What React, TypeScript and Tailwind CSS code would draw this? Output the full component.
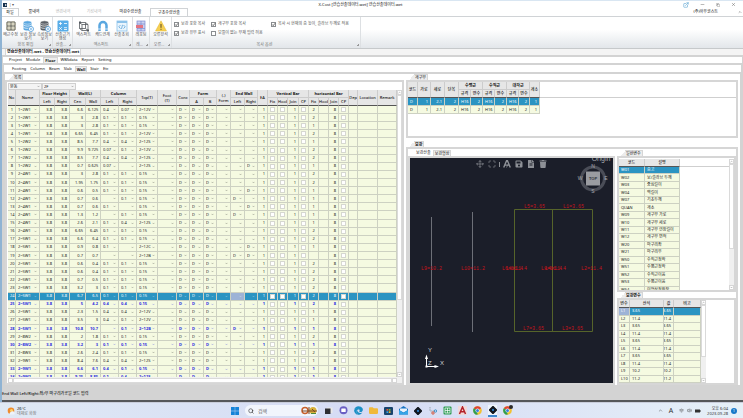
import { useState } from "react";
import type { ReactNode } from "react";
import { ChevronDown, ChevronUp, Move, Maximize, Search, Wifi, Volume2, Minus, Copy, X, ExternalLink } from "lucide-react";
import { FaSave, FaTrash, FaFileAlt, FaEdge, FaFolder } from "react-icons/fa";

type Row = {
  name: string;
  cen: string;
  wall: string;
  cl: string;
  cr: string;
  top: string;
  el: string;
  er: string;
  fix: string;
  edited: boolean;
};

const row = (name: string, cen: string, wall: string, cl: string, cr: string, top: string, fix: string, el = "", er = "", edited = false): Row => ({
  name, cen, wall, cl, cr, top, fix, el, er, edited,
});

const rows: Row[] = [
  row("1~2W1", "6.6", "6.125", "0.4", "0.07", "2~12V", "2"),
  row("1~2W1", "3", "2.8", "0.1", "0.1", "0.15", "2"),
  row("1~2W1", "3", "2.8", "0.1", "0.1", "0.15", "1"),
  row("1~2W1", "6.65", "6.45", "0.1", "0.1", "2~12V", "2"),
  row("1~2W2", "8.5", "7.7", "0.4", "0.4", "2~12S", "1"),
  row("1~2W2", "9.9", "9.725", "0.07", "0.1", "2~12V", "2"),
  row("1~2W2", "8.5", "7.7", "0.4", "0.4", "2~12S", "2"),
  row("1~2W2", "0.7", "0.625", "0.07", "", "2~12S", "1", "", "D"),
  row("2~4W1", "3", "2.8", "0.1", "0.1", "0.15", "2"),
  row("2~4W1", "1.95", "1.75", "0.1", "0.1", "0.15", "2"),
  row("2~4W1", "0.6", "0.5", "0.1", "0.1", "0.15", "1", "", "D"),
  row("2~4W1", "0.7", "0.6", "", "0.1", "0.15", "1", "D"),
  row("2~4W1", "0.7", "0.6", "0.1", "", "0.15", "1", "", "D"),
  row("2~4W1", "1.3", "1.2", "", "0.1", "0.15", "1", "D"),
  row("2~4W1", "2.6", "2.1", "0.1", "0.4", "2~12S", "1"),
  row("2~4W1", "6.65", "6.45", "0.1", "0.1", "0.15", "2"),
  row("2~5W1", "6.6", "6.4", "0.1", "0.1", "0.15", "2"),
  row("2~5W1", "0.9", "0.8", "0.1", "", "2~12C", "1", "", "D"),
  row("2~5W1", "0.7", "0.7", "", "", "2~12B", "", "D", "D"),
  row("2~5W1", "0.6", "0.4", "0.1", "0.1", "0.15", "2"),
  row("2~5W1", "0.6", "0.4", "0.1", "0.1", "0.15", "2"),
  row("2~5W1", "0.7", "0.5", "0.1", "0.1", "0.15", "2"),
  row("2~5W1", "3.2", "3", "0.1", "0.1", "0.15", "2"),
  row("2~5W1", "6.7", "6.5", "0.1", "0.1", "0.15", "2"),
  row("2~5W1", "5", "4.2", "0.4", "0.4", "0.15", "2", "", "", true),
  row("2~5W1", "2.3", "1.5", "0.4", "0.4", "2~12V", "1"),
  row("2~5W1", "3.5", "3", "0.4", "0.1", "2~12V", "1"),
  row("2~5W1", "10.8", "10.7", "", "0.1", "2~12B", "1", "D", "", true),
  row("2~8W2", "2", "1.8", "0.1", "0.1", "0.15", "2"),
  row("2~8W2", "3.2", "3", "0.1", "0.1", "0.15", "1", "", "", true),
  row("2~8W3", "2.6", "2.4", "0.1", "0.1", "0.15", "2"),
  row("2~9W1", "8.4", "7.6", "0.4", "0.4", "2~12S", "1"),
  row("2~9W1", "6.6", "6.1", "0.4", "0.1", "0.15", "1", "", "", true),
  row("2~9W1", "9.25", "8.85", "0.1", "0.4", "2~12S", "1", "", "", true),
];

const wallCols = [8, 24, 15, 15, 16, 15, 18, 18, 21, 19, 13, 14, 13, 14, 14, 13, 10, 10, 10, 11, 10, 10, 10, 10, 10, 9, 20, 19];

const generalVars = [
  ["W01", "층고"],
  ["W02", "보/슬라브 두께"],
  ["W03", "중심길이"],
  ["W04", "벽길이"],
  ["W07", "기초두께"],
  ["QUAN", "개소"],
  ["W09", "개구부 가로"],
  ["W10", "개구부 세로"],
  ["W11", "개구부 연장길이"],
  ["W12", "개구부 면적"],
  ["W20", "마구리좌"],
  ["W21", "마구리우"],
  ["W50", "수직근정착"],
  ["W51", "수평근정착"],
  ["W52", "수직근이음"],
  ["W53", "수평근이음"],
  ["W54", "이형상정착장"],
];

const barVars = [
  ["L1", "3.65", "3.65"],
  ["L2", "11.4", "11.4"],
  ["L3", "3.65", "3.65"],
  ["L4", "11.4", "11.4"],
  ["L5", "3.65", "3.65"],
  ["L6", "11.4", "11.4"],
  ["L7", "3.65", "3.65"],
  ["L8", "11.4", "11.4"],
  ["L9", "10.2", "10.2"],
  ["L10", "11.2", "11.2"],
];

function Cols({ widths }: { widths: number[] }) {
  return (
    <colgroup>
      {widths.map((w, i) => (
        <col key={i} style={{ width: w }} />
      ))}
    </colgroup>
  );
}

function Th({ children, rowSpan, colSpan, last }: { children?: ReactNode; rowSpan?: number; colSpan?: number; last?: boolean }) {
  return (
    <th
      rowSpan={rowSpan}
      colSpan={colSpan}
      className={`overflow-hidden whitespace-nowrap border-r border-[#cccccc] bg-[#e6e6e6] p-0 leading-[5px] ${
        colSpan ? "font-bold" : "font-medium"
      } ${last || rowSpan ? "border-b border-b-[#555555]" : "border-b"}`}
    >
      {children}
    </th>
  );
}

function Td({ children, className = "" }: { children?: ReactNode; className?: string }) {
  return <td className={`overflow-hidden whitespace-nowrap border-b border-r border-[#cdd1c2] p-0 px-[2px] leading-[6px] ${className}`}>{children}</td>;
}

// value + arrow, used in the grid cells
function Drop({ value, label }: { value: string; label: string }) {
  return (
    <span className="flex h-[6px] items-center">
      <select aria-label={label} defaultValue={value} className="h-[6px] min-w-0 flex-1 appearance-none bg-transparent p-0 leading-[6px] outline-none">
        <option>{value}</option>
      </select>
      <ChevronDown className="size-[3px] shrink-0 opacity-70" strokeWidth={3} />
    </span>
  );
}

function Check({ label }: { label: string }) {
  return <input type="checkbox" aria-label={label} className="mx-auto block size-[5px] appearance-none border border-[#d6d8d0] bg-white" />;
}

function VScroll({ thumb }: { thumb: string }) {
  return (
    <div className="flex w-[5px] shrink-0 flex-col bg-[#f0f0f0]">
      <button aria-label="위로" className="flex h-[5px] items-center justify-center border border-[#d6d6d6] bg-white">
        <ChevronUp className="size-[3px]" />
      </button>
      <div className={`border border-[#dadada] bg-white ${thumb}`} />
      <div className="flex-1" />
      <button aria-label="아래로" className="flex h-[5px] items-center justify-center border border-[#d6d6d6] bg-white">
        <ChevronDown className="size-[3px]" />
      </button>
    </div>
  );
}

function Tab({ children }: { children: ReactNode }) {
  return (
    <div className="flex h-[6px] shrink-0 items-end pl-1">
      <div className="h-[6px] w-1 bg-[linear-gradient(135deg,transparent_50%,#ececec_50%)]" />
      <div className="border-r border-t border-[#d6d6d6] bg-[#ececec] px-px text-[4px] leading-[5px]">{children}</div>
    </div>
  );
}

function WallTable() {
  const [selected, setSelected] = useState(23);

  return (
    <table className="h-[292px] w-full table-fixed border-separate border-spacing-0 text-[4px]">
      <Cols widths={wallCols} />
      <thead>
        <tr className="h-2">
          <Th rowSpan={2}>No</Th>
          <Th rowSpan={2}>Name</Th>
          <Th colSpan={2}>Floor Height</Th>
          <Th colSpan={2}>Wall(L)</Th>
          <Th colSpan={2}>Column</Th>
          <Th rowSpan={2}>Top(T)</Th>
          <Th rowSpan={2}>Foot<br />(T)</Th>
          <Th rowSpan={2}>Conc</Th>
          <Th colSpan={2}>Form</Th>
          <Th rowSpan={2}>(-)<br />Form</Th>
          <Th colSpan={2}>End Wall</Th>
          <Th rowSpan={2}>EA</Th>
          <Th colSpan={4}>Vertical Bar</Th>
          <Th colSpan={4}>horizontal Bar</Th>
          <Th rowSpan={2}>Dep</Th>
          <Th rowSpan={2}>Location</Th>
          <Th rowSpan={2}>Remark</Th>
        </tr>
        <tr className="h-2">
          {["Left", "Right", "Cen", "Wall", "Left", "Right", "A", "B", "Left", "Right", "Fix", "Hook", "Join", "CP", "Fix", "Hook", "Join", "CP"].map((h, i) => (
            <Th key={i} last>{h}</Th>
          ))}
        </tr>
      </thead>
      <tbody>
        {rows.map((r, i) => {
          const on = i === selected;
          return (
            <tr
              key={i}
              onClick={() => setSelected(i)}
              className={on ? "bg-[#2b94c2] text-white" : r.edited ? "bg-[#f5fae1] font-bold text-[#2a2ae0]" : "bg-[#f5fae1] text-[#222222]"}
            >
              <Td className="text-right">{i + 1}</Td>
              <Td><Drop value={r.name} label="Name" /></Td>
              <Td className="text-right">3.8</Td>
              <Td className="text-right">3.8</Td>
              <Td className="text-right">{r.cen}</Td>
              <Td className="text-right">{r.wall}</Td>
              <Td><Drop value={r.cl} label="Column Left" /></Td>
              <Td><Drop value={r.cr} label="Column Right" /></Td>
              <Td><Drop value={r.top} label="Top(T)" /></Td>
              <Td><Drop value="" label="Foot(T)" /></Td>
              <Td><Drop value="D" label="Conc" /></Td>
              <Td><Drop value="D" label="Form A" /></Td>
              <Td><Drop value="D" label="Form B" /></Td>
              <Td><Drop value="" label="(-)Form" /></Td>
              <Td className={on ? "bg-[#9db3d6]" : ""}><Drop value={r.el} label="End Wall Left" /></Td>
              <Td><Drop value={r.er} label="End Wall Right" /></Td>
              <Td className="text-right">1</Td>
              <Td><Check label="Vertical Fix" /></Td>
              <Td><Check label="Vertical Hook" /></Td>
              <Td className="text-right">1</Td>
              <Td><Check label="Vertical CP" /></Td>
              <Td className="text-center">{r.fix}</Td>
              <Td />
              <Td className="text-right">8</Td>
              <Td><Check label="Horizontal CP" /></Td>
              <Td />
              <Td />
              <Td />
            </tr>
          );
        })}
      </tbody>
    </table>
  );
}

function OpeningTable() {
  return (
    <table className="w-[132px] shrink-0 table-fixed border-separate border-spacing-0 text-[4px]">
      <Cols widths={[10, 13, 14, 14, 12, 12, 12, 12, 12, 11, 10]} />
      <thead>
        <tr className="h-2">
          <Th rowSpan={2}>코드</Th>
          <Th rowSpan={2}>가로</Th>
          <Th rowSpan={2}>세로</Th>
          <Th rowSpan={2}>단복</Th>
          <Th colSpan={2}>수평근</Th>
          <Th colSpan={2}>수직근</Th>
          <Th colSpan={2}>대각근</Th>
          <Th rowSpan={2}>개소</Th>
        </tr>
        <tr className="h-2">
          {["규격", "면수", "규격", "면수", "규격", "면수"].map((h, i) => (
            <Th key={i} last>{h}</Th>
          ))}
        </tr>
      </thead>
      <tbody>
        {[0, 1].map((n) => (
          <tr key={n} className={n === 0 ? "h-2 bg-[#2b94c2] text-white" : "h-2 bg-[#f5fae1] text-[#222222]"}>
            <Td>D</Td>
            <Td className="text-right">1</Td>
            <Td className="text-right">2.1</Td>
            <Td className="text-right">2</Td>
            <Td>H16</Td>
            <Td className="text-right">2</Td>
            <Td>H16</Td>
            <Td className="text-right">2</Td>
            <Td>H16</Td>
            <Td className="text-right">2</Td>
            <Td className="text-right">1</Td>
          </tr>
        ))}
      </tbody>
    </table>
  );
}

const cadTexts: [number, number, string][] = [
  [524, 207, "L5=3.65"],
  [563, 207, "L1=3.65"],
  [421, 269, "L9=10.2"],
  [461, 269, "L10=11.2"],
  [502, 269, "L6=11.4"],
  [506, 269, "L8=11.4"],
  [541, 269, "L8=11.4"],
  [545, 269, "L4=11.4"],
  [581, 269, "L2=11.4"],
  [523, 329, "L7=3.65"],
  [562, 329, "L3=3.65"],
];

function CadView() {
  return (
    <div className="relative min-h-0 min-w-0 flex-1 overflow-hidden bg-[#1b1e29]">
      <svg viewBox="410 157 203 225" className="h-full w-full" fontFamily="'Liberation Mono', monospace">
        <path d="M431.500 216V325M472.500 211V331" stroke="#6d7078" strokeWidth="1" />
        <path d="M514.500 208.500H592.500V330.500H514.500ZM552.500 208.500V330.500" fill="none" stroke="#56642a" strokeWidth="1" />
        <g fill="#c4141c" fontSize="5">
          {cadTexts.map(([x, y, t]) => (
            <text key={`${x}-${y}`} x={x} y={y}>{t}</text>
          ))}
        </g>
        <circle cx="593" cy="177.5" r="11.5" fill="none" stroke="#4a4d57" strokeWidth="3" />
        <rect x="586" y="170.500" width="14" height="14" fill="#9a9ca1" />
        <g fill="#a8abb0" fontSize="5" textAnchor="middle" fontFamily="'Liberation Sans', sans-serif">
          <text x="593" y="167">N</text>
          <text x="580" y="179">W</text>
          <text x="606" y="179">E</text>
          <text x="593" y="192">S</text>
          <text x="593" y="179" fontSize="4" fontWeight="bold" fill="#30333c">TOP</text>
          <text x="601" y="160" fontSize="7">Origin</text>
        </g>
        <path d="M426.500 357V365.500H435" fill="none" stroke="#ffffff" strokeWidth="1" />
        <path d="M426.500 353.500L428 358H425ZM439 365.500L434.500 367V364ZM425.500 364.500H427.500V366.500H425.500Z" fill="#ffffff" />
        <g fill="#d0d2d6" fontSize="6" fontFamily="'Liberation Sans', sans-serif">
          <text x="428" y="351">Y</text>
          <text x="428" y="364">Z</text>
          <text x="440" y="364">X</text>
        </g>
      </svg>
      <div className="absolute left-0 right-0 top-[2px] flex items-center justify-center gap-1 text-[#8d9096]">
        <button aria-label="이동"><Move className="size-2" /></button>
        <button aria-label="전체보기"><Maximize className="size-2" /></button>
        <span className="-mx-px h-[5px] w-px bg-[#8d9096]" />
        <button aria-label="문자">
          <svg viewBox="0 0 9 9" className="size-2" fill="none" stroke="currentColor">
            <path d="M.8 8.500L4 .8H5L8.200 8.500M2.500 5.800H6.500" strokeWidth="1.600" />
            <path d="M4 8.500L5.500 5" strokeWidth=".8" />
          </svg>
        </button>
        <button aria-label="저장"><FaSave className="size-2" /></button>
        <button aria-label="내보내기"><FaFileAlt className="size-2" /></button>
        <button aria-label="삭제"><FaTrash className="size-2" /></button>
      </div>
    </div>
  );
}

function SmallTh({ children }: { children: ReactNode }) {
  return <th className="border-b border-r border-[#cccccc] border-b-[#555555] bg-[#e6e6e6] p-0 font-medium leading-[6px]">{children}</th>;
}

function GeneralVars() {
  return (
    <section className="flex min-h-0 flex-[138] flex-col">
      <Tab>일반변수</Tab>
      <div className="flex min-h-0 flex-1 overflow-hidden border-2 border-[#d6d6d6] bg-white pt-px">
        <div className="flex min-w-0 flex-1 items-start overflow-hidden">
          <table className="h-[135px] w-[61px] shrink-0 table-fixed border-separate border-spacing-0 text-[4px]">
            <Cols widths={[26, 35]} />
            <thead>
              <tr className="h-2">
                <SmallTh>코드</SmallTh>
                <SmallTh>설명</SmallTh>
              </tr>
            </thead>
            <tbody>
              {generalVars.map(([code, name], i) => (
                <tr key={code} className={i === 0 ? "bg-[#2b94c2] text-white" : "bg-[#f5fae1] text-[#222222]"}>
                  <Td>{code}</Td>
                  <Td>{name}</Td>
                </tr>
              ))}
            </tbody>
          </table>
          <div className="h-2 flex-1 border-b border-[#cfcfcf]" />
        </div>
        <VScroll thumb="h-[85px]" />
      </div>
    </section>
  );
}

function BarVars() {
  return (
    <section className="flex min-h-0 flex-[90] flex-col">
      <Tab><b>보강변수</b></Tab>
      <div className="flex min-h-0 flex-1 overflow-hidden border-2 border-[#d6d6d6] bg-white">
        <div className="overflow-hidden">
          <table className="h-[83px] w-[82px] table-fixed border-separate border-spacing-0 text-[4px]">
            <Cols widths={[11, 34, 10, 27]} />
            <thead>
              <tr className="h-2">
                <SmallTh>변수</SmallTh>
                <SmallTh>산식</SmallTh>
                <SmallTh>값</SmallTh>
                <SmallTh>비고</SmallTh>
              </tr>
            </thead>
            <tbody>
              {barVars.map(([name, expr, value], i) => (
                <tr key={name} className={i === 0 ? "bg-[#2b94c2] text-white" : "bg-[#f5fae1] text-[#222222]"}>
                  <Td className={i === 0 ? "bg-[#9db3d6]" : ""}>{name}</Td>
                  <Td>{expr}</Td>
                  <Td><span className="flex justify-end">{value}</span></Td>
                  <Td />
                </tr>
              ))}
            </tbody>
          </table>
        </div>
        <VScroll thumb="h-[52px]" />
      </div>
    </section>
  );
}

/* ---------- ribbon ---------- */

function GridIcon() {
  return (
    <svg viewBox="0 0 12 12" className="size-3">
      <path d="M2 2H10V10H2ZM2 6H10M6 2V10" fill="none" stroke="#5c5c50" />
      <path d="M1 4H11M1 8H11M4 1V11M8 1V11" stroke="#a29a6c" strokeWidth=".5" />
    </svg>
  );
}

function DbIcon({ dark }: { dark?: boolean }) {
  const c = dark ? "#5b6066" : "#5aa7e0";
  return (
    <svg viewBox="0 0 12 12" className="size-3">
      <path d="M1.500 2.500V9C1.500 11 9.500 11 9.500 9V2.500" fill={c} />
      <ellipse cx="5.500" cy="2.500" rx="4" ry="1.700" fill={c} stroke="#fff" strokeWidth=".5" />
      <path d="M1.500 5C2.500 6.500 8.500 6.500 9.500 5M1.500 7.300C2.500 8.700 8.500 8.700 9.500 7.300" stroke="#fff" strokeWidth=".7" fill="none" />
      <circle cx="9" cy="9" r="2.500" fill="#fff" stroke="#4a9cdb" strokeWidth=".8" />
      <path d="M8 9H10M9 8V10" stroke="#4a9cdb" strokeWidth=".6" />
    </svg>
  );
}

function CalcIcon() {
  return (
    <svg viewBox="0 0 12 12" className="size-3">
      <rect x=".5" y=".5" width="11" height="11" rx="1" fill="#58ade8" />
      <path d="M2 3.500H5M3.500 2V5M7 3.500H10M2.200 7.200L4.800 9.800M4.800 7.200L2.200 9.800M7 7.700H10M7 9.500H10" stroke="#fff" strokeWidth=".8" />
    </svg>
  );
}

function CubeIcon() {
  return (
    <svg viewBox="0 0 12 12" className="size-3" fill="none" stroke="#555a60" strokeWidth=".8">
      <path d="M1.500 2.500H7.500V8.500H1.500ZM4 4.500H10V10.500H4ZM1.500 2.500L4 4.500M7.500 2.500L10 4.500M1.500 8.500L4 10.500M7.500 8.500L10 10.500" />
      <path d="M1 1.500H3V3.500H1ZM9 9.500H11V11.500H9Z" fill="#555a60" stroke="none" />
    </svg>
  );
}

function ArchIcon() {
  return (
    <svg viewBox="0 0 12 12" className="size-3" fill="none">
      <path d="M2.500 11V5.500A3.500 3.500 0 0 1 9.500 5.500V11" stroke="#5aa7e0" strokeWidth="2.500" />
      <path d="M1 9H4M8 9H11" stroke="#fff" strokeWidth=".7" />
    </svg>
  );
}

function CodeIcon() {
  return (
    <svg viewBox="0 0 12 12" className="size-3" fill="none">
      <rect x="1" y="1" width="10" height="10" fill="#eaf5fd" stroke="#8cc2ea" strokeWidth=".8" />
      <rect x="1" y="1" width="10" height="2" fill="#8cc2ea" />
      <path d="M4.500 5L2.800 6.800L4.500 8.600M7.500 5L9.200 6.800L7.500 8.600M6.500 4.800L5.500 9" stroke="#4797d3" strokeWidth=".7" />
    </svg>
  );
}

function ReportIcon() {
  return (
    <svg viewBox="0 0 12 12" className="size-3" fill="none">
      <rect x="2" y="1" width="8" height="10" fill="#c9d2f1" stroke="#7d8bcf" strokeWidth=".7" />
      <path d="M2 4H10M2 8.500H10M6 1V11" stroke="#7d8bcf" strokeWidth=".7" />
      <rect x="1" y="5" width="7" height="3" fill="#e27482" />
    </svg>
  );
}

function WarnIcon() {
  return (
    <svg viewBox="0 0 12 12" className="size-3">
      <path d="M6 .8L11.500 11H.5Z" fill="#f6cf52" stroke="#e3b93b" strokeWidth=".5" strokeLinejoin="round" />
      <path d="M6 4V7.800M6 8.800V9.800" stroke="#5a4a20" />
    </svg>
  );
}

function RibbonButton({ icon, label, width }: { icon: ReactNode; label: ReactNode; width: string }) {
  return (
    <button className={`flex shrink-0 flex-col items-center whitespace-nowrap leading-[4px] ${width}`}>
      {icon}
      <span className="pt-px">{label}</span>
    </button>
  );
}

function RibbonGroup({ caption, children, width }: { caption: string; children: ReactNode; width: string }) {
  return (
    <div className={`flex shrink-0 flex-col border-r border-[#dde0e3] pt-[3px] ${width}`}>
      <div className="flex flex-1 justify-center">{children}</div>
      <div className="flex h-[7px] items-center text-[#777777]">
        <span className="flex-1 text-center leading-[6px]">{caption}</span>
        <span className="mr-px size-[2px] border-b border-r border-[#999999]" />
      </div>
    </div>
  );
}

function Option({ children, checked }: { children: ReactNode; checked?: boolean }) {
  return (
    <label className="flex items-center gap-[2px] whitespace-nowrap leading-[6px]">
      <span className="relative flex size-[5px]">
        <input type="checkbox" defaultChecked={checked} className="peer size-[5px] appearance-none border border-[#8a8d90] bg-white" />
        <svg viewBox="0 0 5 5" className="pointer-events-none absolute inset-0 hidden peer-checked:block">
          <path d="M1.200 2.500L2.200 3.600L4 1.300" fill="none" stroke="#444444" strokeWidth=".8" />
        </svg>
      </span>
      {children}
    </label>
  );
}

function Ribbon() {
  return (
    <div className="flex h-8 shrink-0 border-b border-[#c6c9cb] bg-gradient-to-b from-white from-40% to-[#e2e6ea] text-[4px] text-[#555555]">
      <RibbonGroup caption="항목 편집" width="w-[51px]">
        <RibbonButton width="w-[18px]" icon={<GridIcon />} label="배근수정" />
        <RibbonButton width="w-[17px]" icon={<DbIcon />} label={<>보강 정보<br />보기</>} />
        <RibbonButton width="w-[16px]" icon={<DbIcon dark />} label={<>속성정보<br />보기</>} />
      </RibbonGroup>
      <RibbonGroup caption="산출..." width="w-[20px]">
        <RibbonButton width="w-[18px]" icon={<CalcIcon />} label={<>산출근거<br />생성</>} />
      </RibbonGroup>
      <RibbonGroup caption="엑스퍼트" width="w-[60px]">
        <RibbonButton width="w-[19px]" icon={<CubeIcon />} label="엑스퍼트" />
        <RibbonButton width="w-[19px]" icon={<ArchIcon />} label="캐드연계" />
        <RibbonButton width="w-[19px]" icon={<CodeIcon />} label="산출조회" />
      </RibbonGroup>
      <RibbonGroup caption="레..." width="w-[17px]">
        <RibbonButton width="w-[16px]" icon={<ReportIcon />} label="레포팅" />
      </RibbonGroup>
      <RibbonGroup caption="오류..." width="w-[22px]">
        <RibbonButton width="w-[20px]" icon={<WarnIcon />} label="오류분석" />
      </RibbonGroup>
      <RibbonGroup caption="복사 옵션" width="w-[189px]">
        <div className="flex flex-1 flex-col gap-[3px] pl-[2px] pt-px">
          <div className="flex">
            <div className="w-[37px]"><Option checked>보강 포함 복사</Option></div>
            <div className="w-[60px]"><Option checked>개구부 포함 복사</Option></div>
            <Option checked>복사 시 현재의 층 높이, 슬라브 두께로 적용</Option>
          </div>
          <div className="flex">
            <div className="w-[37px]"><Option checked>보강 유무 표시</Option></div>
            <Option>모듈이 없는 부재 입력 허용</Option>
          </div>
        </div>
      </RibbonGroup>
    </div>
  );
}

function TitleBar() {
  return (
    <header className="shrink-0 bg-white text-[4px]">
      <div className="grid h-2 grid-cols-3 items-center border-t border-[#d9e6f2]">
        <div className="flex items-center gap-[2px] pl-px text-[#555555]">
          <svg viewBox="0 0 4 4" className="size-1">
            <rect width="4" height="4" fill="#16324f" />
            <path d="M2 1L4 2L2 3Z" fill="#fff" />
          </svg>
          <span className="leading-[5px]">| ▾</span>
        </div>
        <div className="whitespace-nowrap pr-6 text-center leading-[6px]">X-Cost [연습산출데이터.wet] 연습산출데이터.wet</div>
        <div className="flex items-center justify-end gap-[11px] pr-[7px] text-[#555555]">
          <button aria-label="새 창"><ExternalLink className="size-[6px] text-[#3d93c9]" /></button>
          <button aria-label="최소화"><Minus className="size-[5px]" /></button>
          <button aria-label="복원"><Copy className="size-1" /></button>
          <button aria-label="닫기"><X className="size-[5px]" /></button>
        </div>
      </div>
      <nav className="flex h-[9px] items-stretch border-b border-[#d0d3d6] leading-[8px]">
        <button className="w-[17px] border-r border-t border-[#d0d3d6]">파일</button>
        <button className="w-[30px]">물내역</button>
        <button className="w-[28px] text-[#bbbbbb]">변경내역</button>
        <button className="w-[34px] text-[#bbbbbb]">기성내역</button>
        <button className="w-[39px]">마감수량산출</button>
        <button className="w-[38px] border-x border-t border-[#d0d3d6]">구조수량산출</button>
        <div className="flex-1" />
        <span className="pr-[20px]">(주)하우코스트</span>
        <button aria-label="리본 접기" className="pr-px"><ChevronUp className="size-1" /></button>
      </nav>
    </header>
  );
}

/* ---------- taskbar ---------- */

function ChromeIcon() {
  return (
    <svg viewBox="0 0 9 9" className="size-[9px]">
      <circle cx="4.500" cy="4.500" r="4.300" fill="#f2c230" />
      <path d="M4.500 4.500L.8 2.300A4.300 4.300 0 0 1 8.200 2.300Z" fill="#dd4336" />
      <path d="M4.500 4.500L.8 2.300A4.300 4.300 0 0 0 4.500 8.800Z" fill="#2f9d54" />
      <circle cx="4.500" cy="4.500" r="2" fill="#fff" />
      <circle cx="4.500" cy="4.500" r="1.500" fill="#3b7ddd" />
    </svg>
  );
}

function CostIcon() {
  return (
    <svg viewBox="0 0 9 9" className="size-2">
      <path d="M4.500 .5L8.500 4.500L4.500 8.500L.5 4.500Z" fill="#10151d" stroke="#10151d" strokeWidth="1.500" strokeLinejoin="round" />
      <circle cx="4.500" cy="4.500" r="1.300" fill="#2a78c0" />
    </svg>
  );
}

function Taskbar() {
  return (
    <footer className="grid h-4 shrink-0 grid-cols-[1fr_auto_1fr] items-center border-t border-[#c9cddb] bg-gradient-to-r from-[#dfe9f5] via-[#d5dbf4] to-[#e6f0f8] text-[4px]">
      <div className="flex items-center gap-[2px] pl-[7px]">
        <svg viewBox="0 0 8 8" className="size-2">
          <circle cx="4" cy="3.800" r="3.300" fill="#ef8b2c" />
          <circle cx="4.500" cy="3.500" r="1.500" fill="#fbd26b" />
          <path d="M3 7.500A1.500 1.500 0 0 1 4 5A2 2 0 0 1 7.500 6A1 1 0 0 1 7 7.500Z" fill="#eef3fa" />
        </svg>
        <div className="leading-[5px]">
          <div>26°C</div>
          <div className="text-[#777777]">대체로 화창</div>
        </div>
      </div>
      <div className="flex items-center gap-[6px]">
        <svg viewBox="0 0 8 8" className="size-2" fill="#1583d8">
          <path d="M0 0H3.800V3.800H0ZM4.200 0H8V3.800H4.200ZM0 4.200H3.800V8H0ZM4.200 4.200H8V8H4.200Z" />
        </svg>
        <label className="flex h-[11px] w-[73px] items-center gap-1 overflow-hidden rounded-full bg-[#f1f5fc] pl-[3px]">
          <Search className="size-[6px]" />
          <input aria-label="검색" placeholder="검색" className="h-2 min-w-0 flex-1 bg-transparent text-[5px] leading-[8px] outline-none placeholder:text-[#666666]" />
          <svg viewBox="0 0 17 9" className="h-[9px] w-[17px]">
            <circle cx="4" cy="4.500" r="3" fill="none" stroke="#c8602c" strokeWidth="1.500" />
            <circle cx="12" cy="4.500" r="3.500" fill="#d8b13a" />
            <path d="M1 5H16M8 1V8M11 3L14 6" stroke="#7a4a24" />
            <path d="M10 7.500H15" stroke="#4f8a3c" />
          </svg>
        </label>
        <svg viewBox="0 0 9 9" className="size-[9px]"><path d="M3 1.500H8.500V7H3Z" fill="#e9e9e9" /><path d="M1 2.500H6.500V8H1Z" fill="#2e2e33" /></svg>
        <svg viewBox="0 0 9 9" className="size-[9px]"><circle cx="4.500" cy="4.300" r="4" fill="#6a5fc4" /><rect x="2.300" y="2.600" width="4.400" height="3.400" rx=".5" fill="#fff" /></svg>
        <FaEdge className="size-[9px] text-[#1b8fc5]" />
        <FaFolder className="size-[9px] text-[#f0b93a]" />
        <svg viewBox="0 0 9 9" className="size-[9px]"><rect y="1" width="9" height="8" rx="1" fill="#19446e" /><path d="M2.500 3H4.200V4.700H2.500Z" fill="#e9522e" /><path d="M4.800 3H6.500V4.700H4.800Z" fill="#7fba34" /><path d="M2.500 5.300H4.200V7H2.500Z" fill="#35a5e8" /><path d="M4.800 5.300H6.500V7H4.800Z" fill="#f5b82e" /></svg>
        <svg viewBox="0 0 9 9" className="size-[9px]"><path d="M0 3L4.500 0L9 3V8.500H0Z" fill="#1873c4" /><path d="M1 2.500H8V4.500L4.500 6.500L1 4.500Z" fill="#e9f4fd" /><path d="M0 4L4.500 7L9 4V8.500H0Z" fill="#35a5e8" /></svg>
        <CostIcon />
        <svg viewBox="0 0 9 9" className="size-[9px]" fill="none"><path d="M2 1V5H7" stroke="#9aa3ad" strokeDasharray="1.500 .7" /><circle cx="5" cy="7" r="1.200" stroke="#d3543a" /><circle cx="7.500" cy="5" r="1.200" stroke="#3d93c9" /></svg>
        <svg viewBox="0 0 9 9" className="size-[9px]"><rect x=".5" y=".5" width="8" height="8" rx="1" fill="#2f9d54" /><path d="M2 2H7V7H2ZM4.500 2V7M2 4.500H7" fill="none" stroke="#fff" strokeWidth=".7" /></svg>
        <svg viewBox="0 0 9 9" className="size-[9px]"><rect width="9" height="9" fill="#f1d9d9" /><path d="M1.500 8L4.500 1L7.500 8M2.500 5.800H6.500" fill="none" stroke="#b3202a" strokeWidth="1.500" /></svg>
        <ChromeIcon />
        <span className="flex h-3 w-[9px] items-center justify-center border-b-2 border-[#3f87cf] bg-[#eef4fb]">
          <CostIcon />
        </span>
        <span className="relative">
          <ChromeIcon />
          <span className="absolute -right-px -top-px size-1 rounded-full bg-[#2c2c2c]" />
        </span>
      </div>
      <div className="flex items-center justify-end gap-[3px] pr-[6px] text-[#333333]">
        <ChevronUp className="size-[5px]" />
        <span className="px-[3px] text-[7px] leading-[8px]">A</span>
        <Wifi className="size-[5px]" />
        <Volume2 className="size-[5px]" />
        <svg viewBox="0 0 6 4" className="mr-[3px] h-1 w-[6px]"><rect x="0" y=".5" width="5" height="3" fill="#333333" /><path d="M5 1.500H6V2.500H5Z" fill="#333333" /></svg>
        <div className="text-right leading-[5px]">
          <div>오후 6:04</div>
          <div>2023-09-28</div>
        </div>
        <span className="flex size-[6px] items-center justify-center rounded-full bg-[#1878c8] text-white">1</span>
      </div>
    </footer>
  );
}

function MenuTabs({ items, active, className }: { items: string[]; active: string; className: string }) {
  return (
    <nav className={`flex shrink-0 items-center gap-[2px] text-[4px] ${className}`}>
      {items.map((t) => (
        <button
          key={t}
          className={`h-[6px] px-px leading-[6px] ${t === active ? "border-x border-t border-[#d6d6d6] bg-[#eeeeee] font-bold leading-[5px]" : ""}`}
        >
          {t}
        </button>
      ))}
    </nav>
  );
}

function Combo({ value, label }: { value: string; label: string }) {
  return (
    <div className="flex h-[7px] w-[34px] items-center border border-[#d0d0d0] bg-[#f4f4f4] pr-px">
      <select aria-label={label} className="h-[5px] min-w-0 flex-1 appearance-none bg-transparent pl-px leading-[5px] outline-none">
        <option>{value}</option>
      </select>
      <ChevronDown className="size-[3px]" />
    </div>
  );
}

export default function App() {
  return (
    <div className="flex h-screen min-h-[400px] flex-col overflow-hidden bg-[#d3d3d3] font-['Noto_Sans','Noto_Sans_CJK_KR',sans-serif] text-[#111111]">
      <div className="flex min-h-0 flex-1 flex-col border-l-2 border-[#8fb3d3]">
        <TitleBar />
        <Ribbon />

        <div className="flex h-[6px] shrink-0 bg-[#f4f4f4] pl-[3px] text-[4px]">
          <div className="border-x border-[#d6d6d6] bg-white px-px font-bold leading-[6px]">연습산출데이터.wet - 연습산출데이터.wet</div>
        </div>
        <div className="flex min-h-0 flex-1 flex-col border-x border-b border-t-2 border-[#d3d3d3] bg-white">
          <MenuTabs className="h-[6px] pl-[5px]" items={["Project", "Module", "Floor", "WBSdata", "Report", "Setting"]} active="Floor" />
          <div className="flex min-h-0 flex-1 flex-col border-x border-b border-t-2 border-[#d3d3d3]">
            <MenuTabs className="h-[7px] pl-[7px]" items={["Footing", "Column", "Beam", "Slab", "Wall", "Stair", "Etc"]} active="Wall" />

            <main className="grid min-h-0 flex-1 grid-cols-[399fr_332fr] grid-rows-[minmax(0,1fr)] gap-[2px] border-x border-b border-t-2 border-[#d3d3d3] bg-white pr-[2px]">
              <section className="flex min-h-0 min-w-0 flex-col">
                <Tab>목록</Tab>
                <div className="flex min-h-0 flex-1 flex-col border-2 border-[#d6d6d6] bg-white pl-px">
                  <div className="flex h-2 shrink-0 items-center text-[4px]">
                    <Combo value="본동" label="동" />
                    <Combo value="2F" label="층" />
                  </div>
                  <div className="flex min-h-0 flex-1">
                    <div className="min-w-0 flex-1 overflow-hidden">
                      <WallTable />
                    </div>
                    <VScroll thumb="h-[205px]" />
                  </div>
                  <div className="flex h-[6px] shrink-0 items-center bg-[#f0f0f0] pr-[5px]">
                    <button aria-label="왼쪽" className="h-[5px] w-[5px] border border-[#d6d6d6] bg-white" />
                    <div className="h-[5px] flex-1 border border-[#dadada] bg-white" />
                    <button aria-label="오른쪽" className="h-[5px] w-[5px] border border-[#d6d6d6] bg-white" />
                  </div>
                </div>
              </section>

              <div className="flex min-h-0 min-w-0 flex-col">
                <Tab>개구부</Tab>
                <div className="flex h-[58px] shrink-0 items-start border-2 border-[#d6d6d6] bg-white">
                  <OpeningTable />
                  <div className="h-4 flex-1 border-b border-[#cfcfcf]" />
                </div>
                <div className="h-[3px] shrink-0" />
                <Tab><b>보강</b></Tab>
                <div className="flex min-h-0 flex-1 gap-[2px] border-2 border-b-0 border-[#d6d6d6] bg-white">
                  <div className="flex min-h-0 min-w-0 flex-[207] flex-col">
                    <div className="flex h-[7px] shrink-0 items-end gap-[2px] pl-2 text-[4px] leading-[6px]">
                      <button>보강산출</button>
                      <button className="border-x border-t border-[#d6d6d6] bg-[#eeeeee] px-px leading-[5px]">보강형상</button>
                    </div>
                    <div className="flex min-h-0 flex-1 border-2 border-[#d6d6d6]">
                      <CadView />
                    </div>
                  </div>
                  <div className="flex min-h-0 min-w-0 flex-[119] flex-col pt-px">
                    <GeneralVars />
                    <BarVars />
                  </div>
                </div>
              </div>
            </main>
          </div>
        </div>

        <div className="h-[14px] shrink-0 border-b-2 border-[#55575a] bg-[#d3d3d3] text-[4px] font-medium leading-[12px]">
          End Wall Left/Right:좌/우 마구리가공일 코드 입력
        </div>
      </div>
      <Taskbar />
    </div>
  );
}
